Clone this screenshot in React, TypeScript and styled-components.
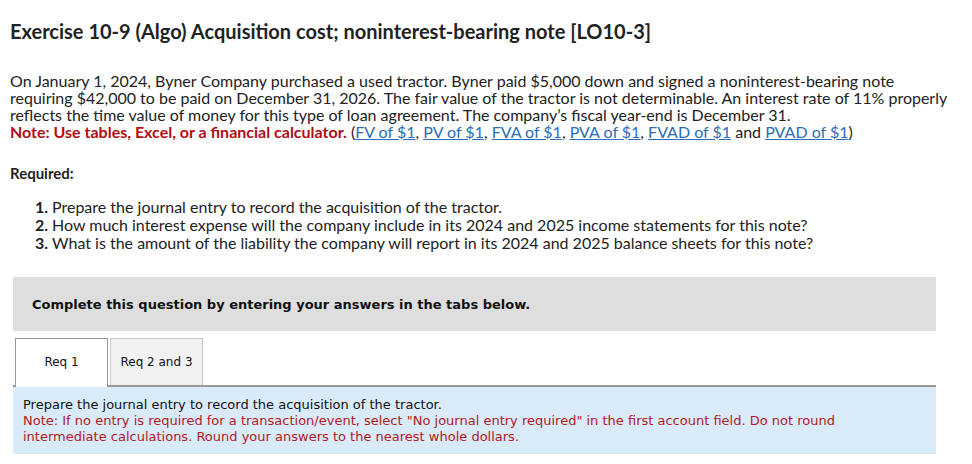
import React from "react";
import styled, { createGlobalStyle } from "styled-components";

const Global = createGlobalStyle`
  html, body { margin: 0; padding: 0; background: #fff; }
  body { font-family: Lato, "Open Sans", Arial, sans-serif; color: #222; }
`;

const Page = styled.div`
  padding: 19px 36px 0 10px;
  width: 972px;
  box-sizing: border-box;
`;

const Title = styled.h1`
  margin: 0;
  font-size: 20px;
  font-weight: 700;
  line-height: 24px;
  color: #222;
`;

const Paragraph = styled.p`
  margin: 29px -16px 0 0;
  font-size: 16px;
  line-height: 17px;
  color: #222;
`;

const NoteStrong = styled.strong`
  display: inline-block;
  line-height: 17px;
  color: #b20d13;
  font-weight: 700;
`;

const Link = styled.a`
  display: inline-block;
  line-height: 17px;
  color: #2c6db5;
  text-decoration: underline;
`;

const Required = styled.h2`
  margin: 24px 0 0;
  font-size: 15px;
  font-weight: 700;
  line-height: 18px;
`;

const List = styled.ol`
  margin: 16px 0 0;
  padding: 0 0 0 24px;
  list-style: none;
  font-size: 16px;
  line-height: 18px;
`;

const Item = styled.li`
  display: flex;
  gap: 4px;
`;

const Num = styled.span`
  font-weight: 700;
  display: inline-block;
  width: 14px;
  text-align: right;
`;

const Banner = styled.div`
  margin: 25px 0 0 3px;
  background: #dedede;
  height: 54px;
  display: flex;
  align-items: center;
  padding-left: 19px;
  font-family: "DejaVu Sans", Verdana, sans-serif;
  font-weight: 700;
  font-size: 13px;
  color: #111;
`;

const Tabs = styled.div`
  margin: 7px 0 0 3px;
  display: flex;
  gap: 2px;
  padding-left: 2px;
  border-bottom: 2px solid #999;
`;

const Tab = styled.div<{ $active?: boolean }>`
  width: 93px;
  box-sizing: border-box;
  display: flex;
  align-items: center;
  justify-content: center;
  font-family: "DejaVu Sans", Verdana, sans-serif;
  font-size: 12px;
  color: #111;
  background: ${(p) => (p.$active ? "#fff" : "#f2f2f2")};
  border: 1px solid ${(p) => (p.$active ? "#999" : "#c8c8c8")};
  border-bottom: none;
  margin-bottom: ${(p) => (p.$active ? "-2px" : "0")};
  height: ${(p) => (p.$active ? "49px" : "47px")};
  padding-bottom: ${(p) => (p.$active ? "2px" : "0")};
`;

const Panel = styled.div`
  margin-left: 3px;
  background: #d9ebf9;
  padding: 10px 80px 9px 10px;
  font-family: "DejaVu Sans", Verdana, sans-serif;
  font-size: 13px;
  line-height: 16px;
  color: #111;
`;

const PanelNote = styled.div`
  color: #b21a1f;
`;

export default function App() {
  return (
    <>
      <Global />
      <Page>
        <Title>Exercise 10-9 (Algo) Acquisition cost; noninterest-bearing note [LO10-3]</Title>
        <Paragraph>
          On January 1, 2024, Byner Company purchased a used tractor. Byner paid $5,000 down and
          signed a noninterest-bearing note requiring $42,000 to be paid on December 31, 2026. The
          fair value of the tractor is not determinable. An interest rate of 11% properly reflects
          the time value of money for this type of loan agreement. The company’s fiscal year-end is
          December 31.
          <br />
          <NoteStrong>Note: Use tables, Excel, or a financial calculator.</NoteStrong> (
          <Link href="#">FV of $1</Link>, <Link href="#">PV of $1</Link>,{" "}
          <Link href="#">FVA of $1</Link>, <Link href="#">PVA of $1</Link>,{" "}
          <Link href="#">FVAD of $1</Link> and <Link href="#">PVAD of $1</Link>)
        </Paragraph>
        <Required>Required:</Required>
        <List>
          <Item>
            <Num>1.</Num>
            <span>Prepare the journal entry to record the acquisition of the tractor.</span>
          </Item>
          <Item>
            <Num>2.</Num>
            <span>
              How much interest expense will the company include in its 2024 and 2025 income
              statements for this note?
            </span>
          </Item>
          <Item>
            <Num>3.</Num>
            <span>
              What is the amount of the liability the company will report in its 2024 and 2025
              balance sheets for this note?
            </span>
          </Item>
        </List>
        <Banner>Complete this question by entering your answers in the tabs below.</Banner>
        <Tabs>
          <Tab $active>Req 1</Tab>
          <Tab>Req 2 and 3</Tab>
        </Tabs>
        <Panel>
          <div>Prepare the journal entry to record the acquisition of the tractor.</div>
          <PanelNote>
            Note: If no entry is required for a transaction/event, select "No journal entry
            required" in the first account field. Do not round intermediate calculations. Round
            your answers to the nearest whole dollars.
          </PanelNote>
        </Panel>
      </Page>
    </>
  );
}
